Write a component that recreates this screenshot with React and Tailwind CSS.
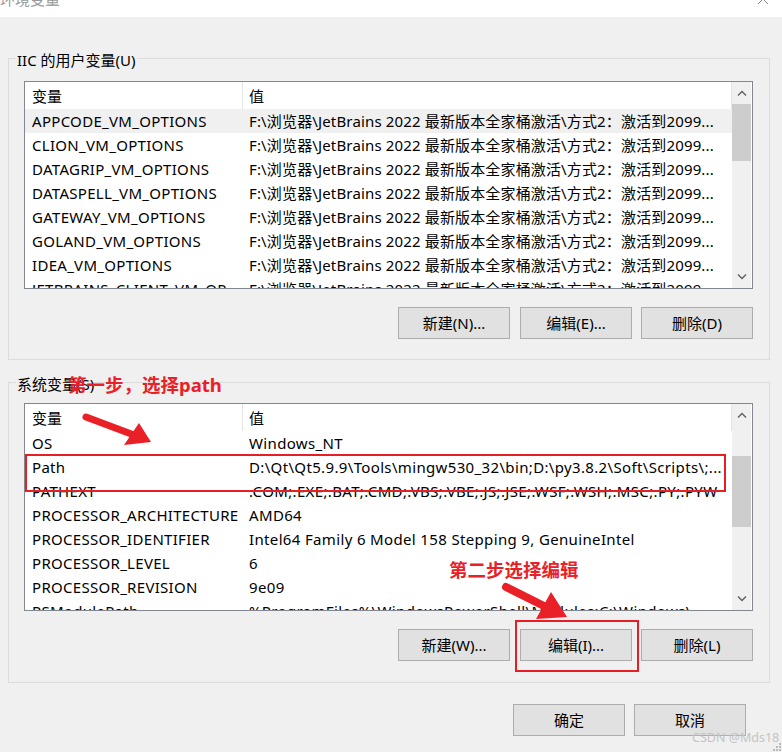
import React from 'react'

const JB = 'F:\\浏览器\\JetBrains 2022 最新版本全家桶激活\\方式2：激活到2099...'

const userRows = [
  ['APPCODE_VM_OPTIONS', JB],
  ['CLION_VM_OPTIONS', JB],
  ['DATAGRIP_VM_OPTIONS', JB],
  ['DATASPELL_VM_OPTIONS', JB],
  ['GATEWAY_VM_OPTIONS', JB],
  ['GOLAND_VM_OPTIONS', JB],
  ['IDEA_VM_OPTIONS', JB],
  ['JETBRAINS_CLIENT_VM_OP...', JB],
]

const sysRows = [
  ['OS', 'Windows_NT'],
  ['Path', 'D:\\Qt\\Qt5.9.9\\Tools\\mingw530_32\\bin;D:\\py3.8.2\\Soft\\Scripts\\;...'],
  ['PATHEXT', '.COM;.EXE;.BAT;.CMD;.VBS;.VBE;.JS;.JSE;.WSF;.WSH;.MSC;.PY;.PYW'],
  ['PROCESSOR_ARCHITECTURE', 'AMD64'],
  ['PROCESSOR_IDENTIFIER', 'Intel64 Family 6 Model 158 Stepping 9, GenuineIntel'],
  ['PROCESSOR_LEVEL', '6'],
  ['PROCESSOR_REVISION', '9e09'],
  ['PSModulePath', '%ProgramFiles%\\WindowsPowerShell\\Modules;C:\\Windows\\...'],
]

function Chevron({ up }) {
  return (
    <svg width="10" height="6" viewBox="0 0 10 6" className="text-[#606060]">
      <polyline
        points={up ? '1,5.5 5,1.5 9,5.5' : '1,0.5 5,4.5 9,0.5'}
        fill="none"
        stroke="currentColor"
        strokeWidth="1.4"
      />
    </svg>
  )
}

// vertical scrollbar, thumb offset/height passed as full class names
function ScrollBar({ thumbClass }) {
  return (
    <div className="w-[19px] mr-px bg-[#f0f0f0] flex flex-col shrink-0">
      <div className="h-[22px] flex items-center justify-center">
        <Chevron up />
      </div>
      <div className="flex-1 flex flex-col">
        <div className={`bg-[#cdcdcd] ${thumbClass}`} />
      </div>
      <div className="h-[22px] flex items-center justify-center">
        <Chevron />
      </div>
    </div>
  )
}

function ListView({ rows, selected, thumbClass, valueClass }) {
  return (
    <div className="w-[729px] h-[208px] border border-[#828790] bg-white flex overflow-hidden">
      <div className="flex-1 min-w-0 overflow-hidden">
        <div className="h-[27px] flex">
          <div className="w-[218px] pl-[7px] flex items-center border-r border-[#e5e5e5] shrink-0">变量</div>
          <div className="flex-1 pl-[6px] flex items-center border-r border-[#e5e5e5]">值</div>
        </div>
        {rows.map(([name, value], i) => (
          <div
            key={name}
            className={`h-[24px] flex items-center ${i === selected ? 'bg-[#f0f0f0]' : ''}`}
          >
            <div className="w-[218px] pl-[7px] shrink-0 whitespace-nowrap overflow-hidden text-ellipsis tracking-[0.3px]">
              {name}
            </div>
            <div className={`flex-1 min-w-0 pl-[6px] pr-[3px] whitespace-nowrap overflow-hidden text-ellipsis ${valueClass}`}>
              {value}
            </div>
          </div>
        ))}
      </div>
      <ScrollBar thumbClass={thumbClass} />
    </div>
  )
}

function Btn({ children, className = '' }) {
  return (
    <button className={`w-[112px] h-[32px] border border-[#adadad] bg-[#e1e1e1] flex items-center justify-center ${className}`}>
      {children}
    </button>
  )
}

export default function App() {
  return (
    <div className="relative w-[782px] h-[752px] bg-[#f0f0f0] overflow-hidden text-[15px] leading-[20px] text-black font-[family-name:'Noto_Sans','Noto_Sans_CJK_SC',sans-serif]">
      {/* title bar (cut off) */}
      <div className="h-[17px] bg-white flex justify-between overflow-hidden">
        <span className="-mt-[11px] text-[#9a9a9a]">环境变量</span>
        <svg width="12" height="12" viewBox="0 0 12 12" className="mr-[13px] -mt-[7px]">
          <path d="M1 1 L11 11 M11 1 L1 11" stroke="#8a8a8a" strokeWidth="1" fill="none" />
        </svg>
      </div>

      {/* user variables */}
      <div className="relative ml-[8px] mt-[41px] w-[762px] h-[302px] border border-[#dcdcdc] pt-[22px] pl-[15px]">
        <span className="absolute left-[7px] -top-[9px] px-px bg-[#f0f0f0]">IIC 的用户变量(U)</span>
        <ListView rows={userRows} selected={0} thumbClass="h-[57px]" valueClass="tracking-[0.15px]" />
        <div className="mt-[18px] w-[729px] flex justify-end">
          <Btn>新建(N)...</Btn>
          <Btn className="ml-[10px]">编辑(E)...</Btn>
          <Btn className="ml-[9px]">删除(D)</Btn>
        </div>
      </div>

      {/* system variables */}
      <div className="relative ml-[8px] mt-[22px] w-[762px] h-[301px] border border-[#dcdcdc] pt-[20px] pl-[15px]">
        <span className="absolute left-[7px] -top-[9px] px-px bg-[#f0f0f0]">系统变量(S)</span>
        <ListView rows={sysRows} selected={-1} thumbClass="mt-[30px] h-[71px]" valueClass="tracking-[0.35px]" />
        <div className="mt-[18px] w-[729px] flex justify-end">
          <Btn>新建(W)...</Btn>
          <Btn className="ml-[10px]">编辑(I)...</Btn>
          <Btn className="ml-[9px]">删除(L)</Btn>
        </div>
      </div>

      <div className="mt-[21px] pr-[36px] flex justify-end">
        <Btn>确定</Btn>
        <Btn className="ml-[9px]">取消</Btn>
      </div>

      {/* annotations */}
      <div className="absolute left-[25px] top-[454px] w-[701px] h-[38px] border-2 border-[#e81e25]" />
      <div className="absolute left-[515px] top-[620px] w-[124px] h-[52px] border-2 border-[#e81e25]" />
      <div className="absolute left-[68px] top-[373px] leading-[24px] text-[18.5px] font-bold text-[#ea2027]">
        第一步，选择path
      </div>
      <div className="absolute left-[449px] top-[558px] leading-[24px] text-[18.5px] font-bold text-[#ea2027]">
        第二步选择编辑
      </div>
      <svg className="absolute left-0 top-0 pointer-events-none" width="782" height="752">
        <line x1="86" y1="417" x2="134" y2="435" stroke="#ea2027" strokeWidth="7" strokeLinecap="round" />
        <polygon points="124,445 139,423 151,442" fill="#ea2027" />
        <line x1="506" y1="587" x2="546" y2="607" stroke="#ea2027" strokeWidth="8" strokeLinecap="round" />
        <polygon points="536,619 551,592 567,617" fill="#ea2027" />
      </svg>

      {/* watermark + grip */}
      <div className="absolute left-[692px] top-[730px] text-[12.5px] leading-[16px] text-[#c4c4c4]">
        CSDN @Mds18
      </div>
      <svg className="absolute right-[1px] bottom-[1px]" width="9" height="9" viewBox="0 0 9 9">
        <rect x="7" y="1" width="2" height="2" fill="#b8b8b8" />
        <rect x="4" y="4" width="2" height="2" fill="#b8b8b8" />
        <rect x="7" y="4" width="2" height="2" fill="#b8b8b8" />
        <rect x="1" y="7" width="2" height="2" fill="#b8b8b8" />
        <rect x="4" y="7" width="2" height="2" fill="#b8b8b8" />
        <rect x="7" y="7" width="2" height="2" fill="#b8b8b8" />
      </svg>
    </div>
  )
}
